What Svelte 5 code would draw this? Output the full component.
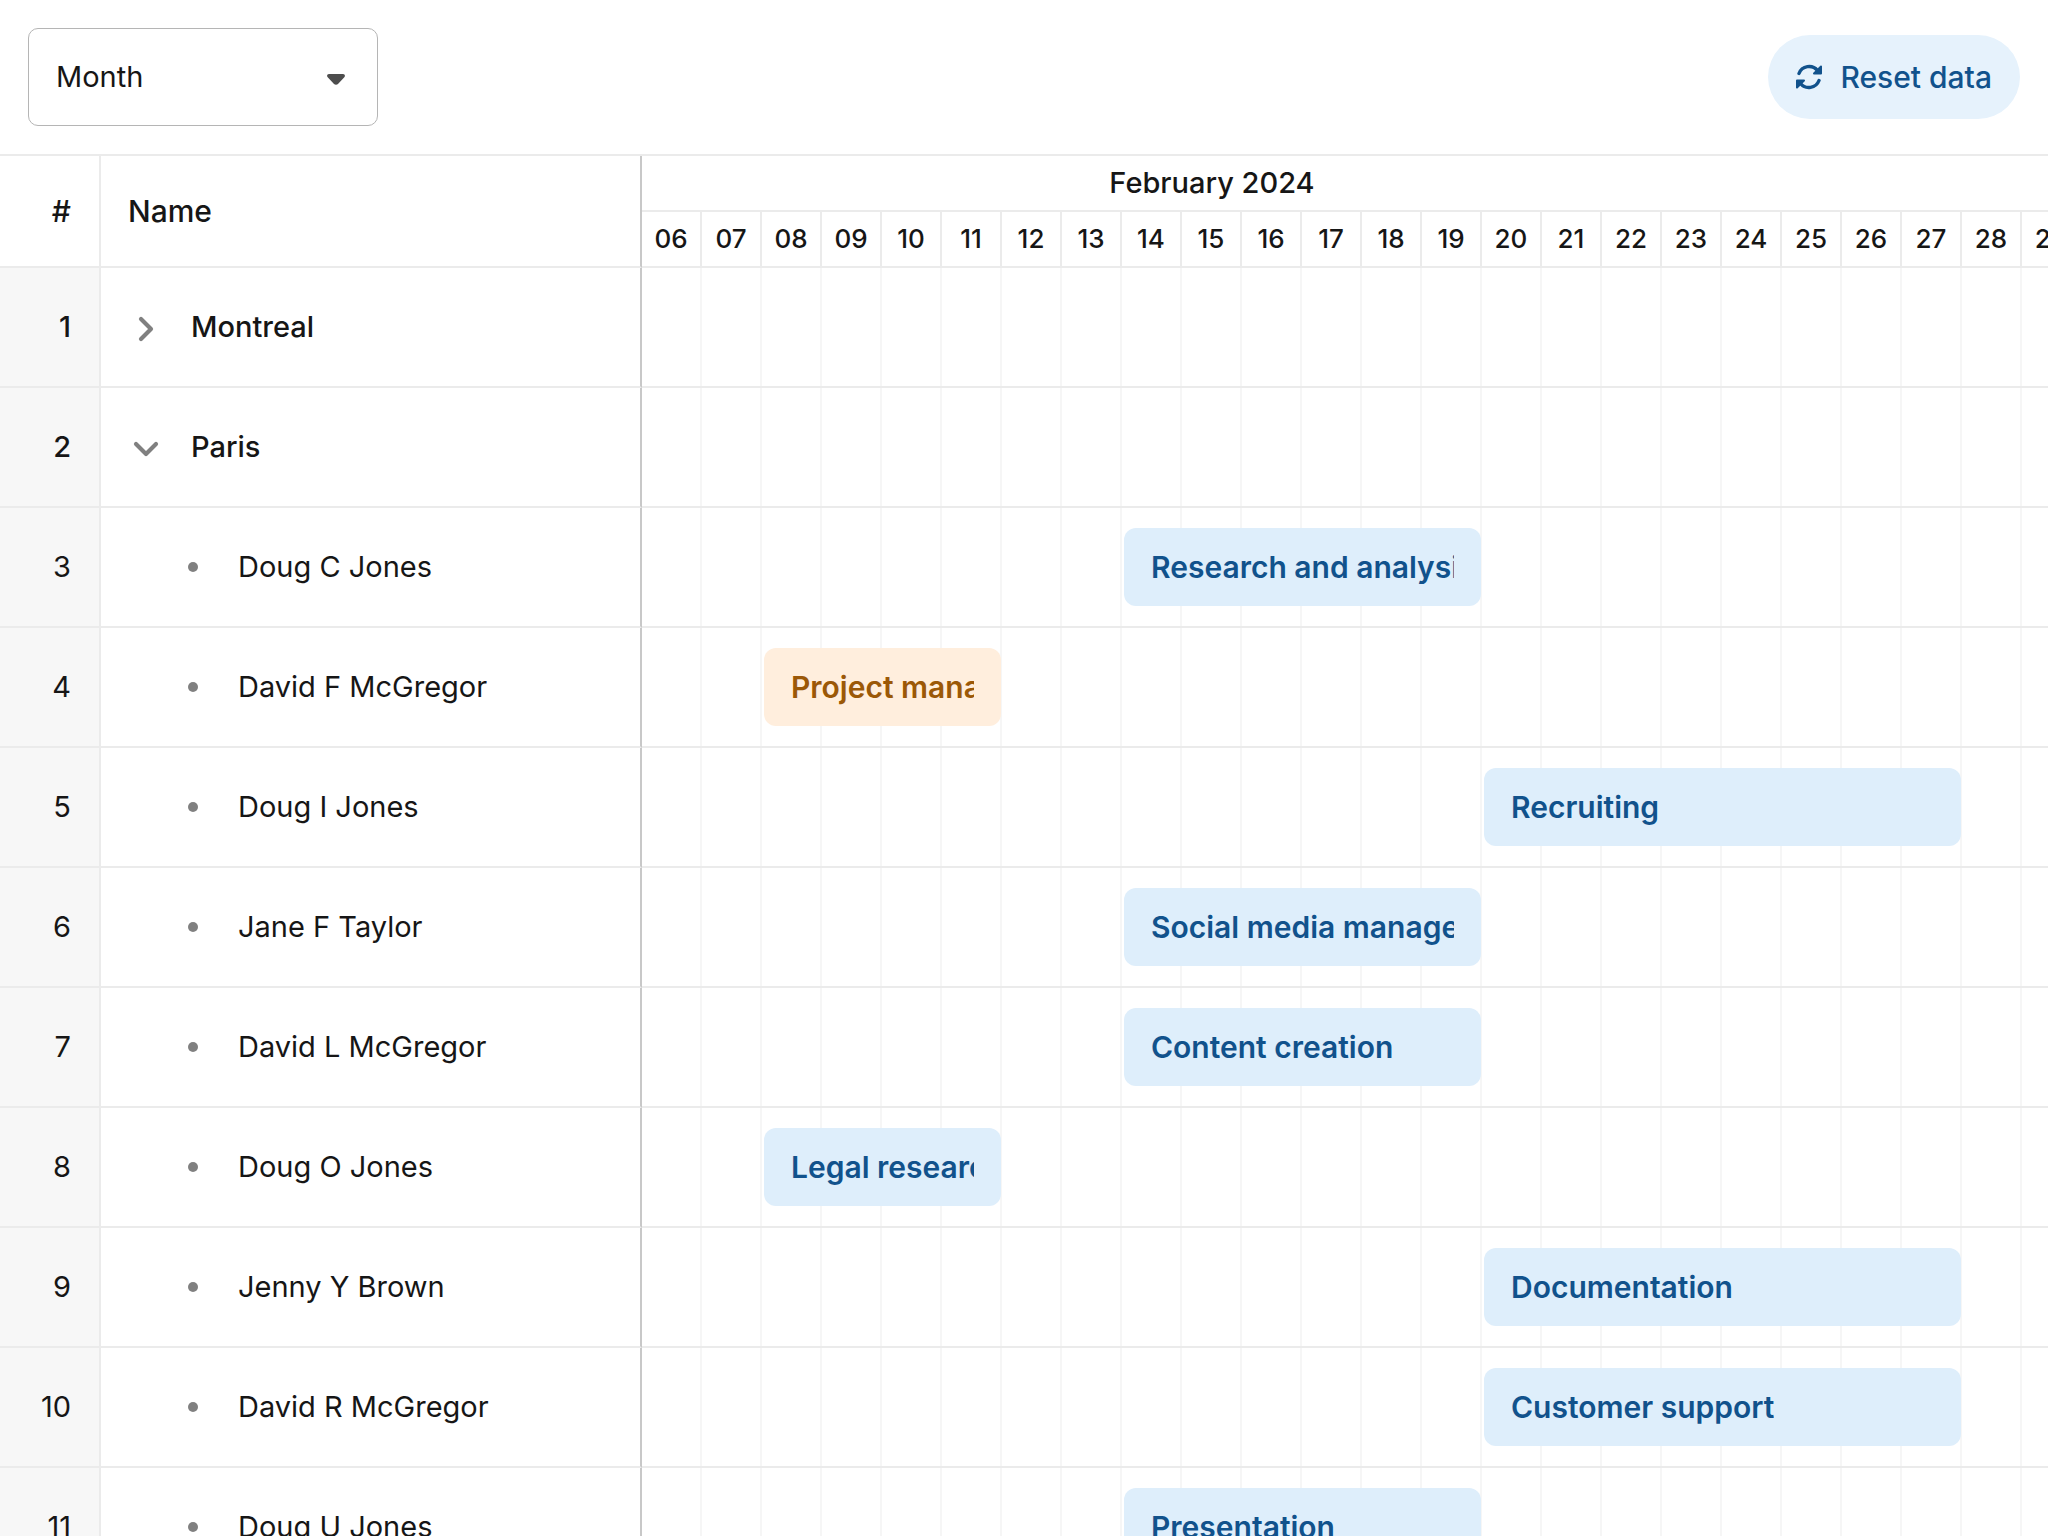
<script lang="ts">
	type Booking = { label: string; from: number; to: number; tone?: string };
	type Row = { name: string; group?: boolean; booking?: Booking };

	const FIRST_DAY = 6;
	const LAST_DAY = 29;
	const dayCount = LAST_DAY - FIRST_DAY + 1;
	const days = Array.from({ length: dayCount }, (_, i) => FIRST_DAY + i);

	let view = $state('month');
	let open = $state({ Montreal: false, Paris: true });

	const rows: Row[] = [
		{ name: 'Montreal', group: true },
		{ name: 'Paris', group: true },
		{ name: 'Doug C Jones', booking: { label: 'Research and analysis', from: 14, to: 20 } },
		{
			name: 'David F McGregor',
			booking: { label: 'Project management', from: 8, to: 12, tone: 'orange' }
		},
		{ name: 'Doug I Jones', booking: { label: 'Recruiting', from: 20, to: 28 } },
		{ name: 'Jane F Taylor', booking: { label: 'Social media management', from: 14, to: 20 } },
		{ name: 'David L McGregor', booking: { label: 'Content creation', from: 14, to: 20 } },
		{ name: 'Doug O Jones', booking: { label: 'Legal research', from: 8, to: 12 } },
		{ name: 'Jenny Y Brown', booking: { label: 'Documentation', from: 20, to: 28 } },
		{ name: 'David R McGregor', booking: { label: 'Customer support', from: 20, to: 28 } },
		{ name: 'Doug U Jones', booking: { label: 'Presentation', from: 14, to: 20 } }
	];

	const visibleRows = $derived(rows.filter((row) => row.group || open.Paris));

	function reset() {
		view = 'month';
		open = { Montreal: false, Paris: true };
	}

	function column(day: number) {
		return day - FIRST_DAY + 1;
	}
</script>

<div class="scheduler">
	<header class="toolbar">
		<div class="view-picker">
			<select bind:value={view} aria-label="View">
				<option value="month">Month</option>
			</select>
			<svg class="caret" viewBox="0 0 18 11" aria-hidden="true">
				<path
					d="M2 0H16C17.8 0 18.6 2 17.3 3.3L11 9.9C9.9 11 8.1 11 7 9.9L0.7 3.3C-0.6 2 0.2 0 2 0Z"
				/>
			</svg>
		</div>

		<button class="reset" onclick={reset}>
			<svg viewBox="0 0 26 26" aria-hidden="true">
				<path class="arc" d="M3 9.5A10.8 10.8 0 0 1 21.5 6.5" />
				<path class="head" d="M25 2.5V9.5H18L25 2.5Z" />
				<path class="arc" d="M23 16.5A10.8 10.8 0 0 1 4.5 19.5" />
				<path class="head" d="M1 23.5V16.5H8L1 23.5Z" />
			</svg>
			Reset data
		</button>
	</header>

	<div class="grid-wrapper">
		<table>
			<colgroup>
				<col class="col-number" />
				<col class="col-name" />
				{#each days as day (day)}
					<col class="col-day" />
				{/each}
			</colgroup>
			<thead>
				<tr>
					<th class="number" rowspan="2" scope="col">#</th>
					<th class="name" rowspan="2" scope="col">Name</th>
					<th class="month" colspan={dayCount}>
						<div class="month-label">February 2024</div>
					</th>
				</tr>
				<tr>
					{#each days as day (day)}
						<th class="day" scope="col">{String(day).padStart(2, '0')}</th>
					{/each}
				</tr>
			</thead>
			<tbody>
				{#each visibleRows as row, i (row.name)}
					<tr class:group={row.group}>
						<td class="number">{i + 1}</td>
						<td class="name">
							<div class="name-content">
								{#if row.group}
									<button
										class="toggle"
										aria-label={row.name}
										aria-expanded={open[row.name]}
										onclick={() => (open[row.name] = !open[row.name])}
									>
										<svg class:expanded={open[row.name]} viewBox="0 0 26 26" aria-hidden="true">
											<path d="M8 3L18 13L8 23" />
										</svg>
									</button>
								{:else}
									<span class="bullet"></span>
								{/if}
								<span>{row.name}</span>
							</div>
						</td>
						<td class="timeline" colspan={dayCount}>
							{#if row.booking}
								<div class="track">
									<div
										class="booking {row.booking.tone ?? 'blue'}"
										style="grid-column: {column(row.booking.from)} / {column(row.booking.to)}"
									>
										<div class="booking-label">{row.booking.label}</div>
									</div>
								</div>
							{/if}
						</td>
					</tr>
				{/each}
			</tbody>
		</table>
	</div>
</div>

<style>
	:global(body) {
		margin: 0;
		background: #fff;
	}

	.scheduler {
		--line: #ebebeb;
		--day-width: 60px;
		display: flex;
		flex-direction: column;
		height: 100vh;
		overflow: hidden;
		box-sizing: border-box;
		background: #fff;
		color: #161616;
		font-family: Inter, 'Liberation Sans', sans-serif;
		font-size: 29px;
		line-height: 40px;
	}

	.toolbar {
		display: flex;
		justify-content: space-between;
		align-items: center;
		padding: 28px;
		border-bottom: 2px solid var(--line);
	}

	.view-picker {
		position: relative;
	}

	select {
		appearance: none;
		display: block;
		box-sizing: border-box;
		width: 350px;
		height: 98px;
		padding: 0 72px 0 27px;
		border: 1px solid #b5b5b5;
		border-radius: 10px;
		background: #fff;
		color: inherit;
		font: inherit;
	}

	.caret {
		position: absolute;
		top: 46px;
		right: 33px;
		width: 18px;
		height: 11px;
		fill: #4d4d4d;
		pointer-events: none;
	}

	.reset {
		display: flex;
		align-items: center;
		gap: 18px;
		height: 84px;
		padding: 0 28px;
		border: none;
		border-radius: 42px;
		background: #e6f2fc;
		color: #11528c;
		font: inherit;
		font-size: 30px;
		font-weight: 500;
		cursor: pointer;
	}

	.reset svg {
		width: 26px;
		height: 26px;
	}

	.arc {
		fill: none;
		stroke: #11528c;
		stroke-width: 3.4;
		stroke-linecap: round;
	}

	.head {
		fill: #11528c;
		stroke: #11528c;
		stroke-width: 2;
		stroke-linejoin: round;
	}

	.grid-wrapper {
		flex: 1;
		min-height: 0;
		overflow: hidden;
	}

	table {
		width: max-content;
		table-layout: fixed;
		border-collapse: separate;
		border-spacing: 0;
	}

	.col-number {
		width: 101px;
	}

	.col-name {
		width: 541px;
	}

	.col-day {
		width: var(--day-width);
	}

	th,
	td {
		box-sizing: border-box;
		padding: 0;
		border-bottom: 2px solid var(--line);
	}

	th {
		height: 56px;
		font-weight: 500;
	}

	.number {
		padding-right: 28px;
		border-right: 2px solid var(--line);
		text-align: right;
	}

	.name {
		padding-left: 27px;
		border-right: 2px solid #c8c8c8;
		text-align: left;
	}

	th.number,
	th.name {
		font-size: 30px;
	}

	/* February starts five days before the first visible column */
	.month-label {
		margin-left: calc(-5 * var(--day-width));
		text-align: center;
	}

	.day {
		border-right: 2px solid var(--line);
		font-size: 26px;
		text-align: center;
	}

	td {
		height: 120px;
	}

	td.number {
		background: #f7f7f7;
	}

	.group {
		font-weight: 500;
	}

	.name-content {
		display: flex;
		align-items: center;
	}

	.toggle {
		display: flex;
		margin-right: 27px;
		padding: 8px 5px 4px;
		border: none;
		background: none;
		cursor: pointer;
	}

	.toggle svg {
		width: 26px;
		height: 26px;
		fill: none;
		stroke: #808080;
		stroke-width: 4.2;
		stroke-linecap: round;
		stroke-linejoin: round;
	}

	.toggle svg.expanded {
		transform: rotate(90deg);
	}

	.bullet {
		width: 10px;
		height: 10px;
		margin: 0 40px 0 60px;
		border-radius: 50%;
		background: #808080;
	}

	.timeline {
		background: repeating-linear-gradient(
			to right,
			transparent 0 calc(var(--day-width) - 2px),
			#f6f6f6 calc(var(--day-width) - 2px) var(--day-width)
		);
	}

	.track {
		display: grid;
		grid-template-columns: repeat(auto-fill, var(--day-width));
	}

	.booking {
		display: flex;
		align-items: center;
		min-width: 0;
		height: 78px;
		margin: 0 1px 0 2px;
		padding: 0 27px;
		box-sizing: border-box;
		border-radius: 12px;
		font-size: 30px;
		font-weight: 600;
	}

	.booking-label {
		overflow: hidden;
		white-space: nowrap;
	}

	.blue {
		background: #deeefb;
		color: #11528c;
	}

	.orange {
		background: #ffeedd;
		color: #9b5807;
	}
</style>
